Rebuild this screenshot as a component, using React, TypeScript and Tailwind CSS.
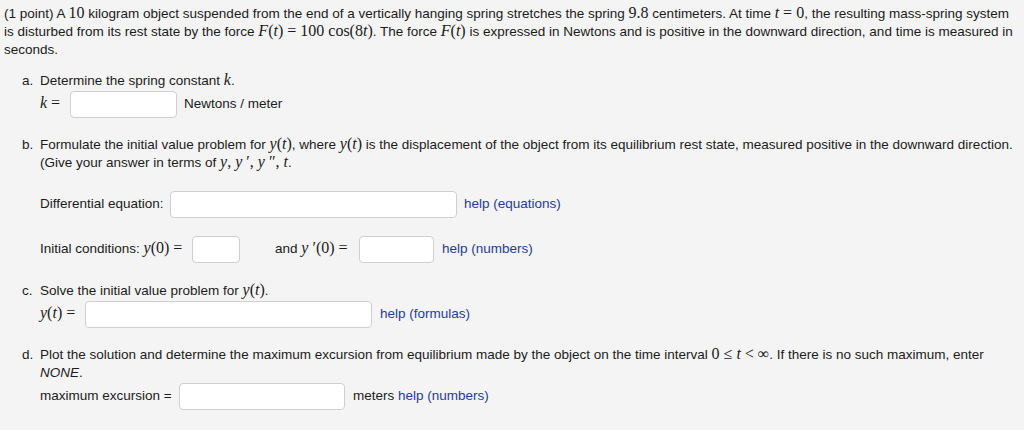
import React from "react";

const M = ({ children }: { children: React.ReactNode }) => (
  <span className="text-[16px] leading-none" style={{ fontFamily: '"Liberation Serif", "Times New Roman", serif' }}>
    {children}
  </span>
);
const I = ({ children }: { children: React.ReactNode }) => <i>{children}</i>;
const Eq = ({ c = "=" }: { c?: string }) => <span className="mx-[4px]">{c}</span>;

const Input = ({ w }: { w: string }) => (
  <span className={`inline-block h-[27px] ${w} rounded-[4px] border border-[#cfcfcf] bg-white`} />
);

const Help = ({ children }: { children: React.ReactNode }) => (
  <span className="text-[#1f3c94]">{children}</span>
);

export default function App() {
  return (
    <div
      className="w-[1024px] h-[430px] bg-[#f4f4f4] text-[#1b1b1b] text-[13.5px] leading-[18px] pt-[5px] overflow-hidden"
      style={{ fontFamily: '"Liberation Sans", Arial, Helvetica, sans-serif' }}
    >
      <div className="px-[4px] whitespace-nowrap">
        <div>
          (1 point) A <M>10</M> kilogram object suspended from the end of a vertically hanging spring stretches the spring <M>9.8</M> centimeters. At time <M><I>t</I><Eq />0</M>, the resulting mass-spring system
        </div>
        <div>
          is disturbed from its rest state by the force <M><I>F</I>(<I>t</I>)<Eq />100 cos(8<I>t</I>)</M>. The force <M><I>F</I>(<I>t</I>)</M> is expressed in Newtons and is positive in the downward direction, and time is measured in
        </div>
        <div>seconds.</div>
      </div>

      {/* a */}
      <div className="mt-[13px] flex whitespace-nowrap">
        <span className="ml-[22px] w-[18px]">a.</span>
        <div className="flex flex-col">
          <div>
            Determine the spring constant <M><I>k</I></M>.
          </div>
          <div className="flex h-[28px] items-center">
            <span className="w-[30px]"><M><I>k</I><Eq /></M></span>
            <Input w="w-[107px]" />
            <span className="ml-[7px]">Newtons / meter</span>
          </div>
        </div>
      </div>

      {/* b */}
      <div className="mt-[18px] flex whitespace-nowrap">
        <span className="ml-[22px] w-[18px]">b.</span>
        <div className="flex flex-col">
          <div>
            Formulate the initial value problem for <M><I>y</I>(<I>t</I>)</M>, where <M><I>y</I>(<I>t</I>)</M> is the displacement of the object from its equilibrium rest state, measured positive in the downward direction.
          </div>
          <div>
            (Give your answer in terms of <M><I>y</I>, <I>y</I> ′, <I>y</I> ″, <I>t</I></M>.
          </div>
          <div className="mt-[18px] flex h-[28px] items-center">
            <span className="w-[130px]">Differential equation:</span>
            <Input w="w-[287px]" />
            <span className="ml-[7px]"><Help>help (equations)</Help></span>
          </div>
          <div className="mt-[17px] flex h-[28px] items-center">
            <span className="w-[152px]">
              Initial conditions: <M><I>y</I>(0)<Eq /></M>
            </span>
            <Input w="w-[48px]" />
            <span className="ml-[35px] w-[84px]">
              and <M><I>y</I> ′(0)<Eq /></M>
            </span>
            <Input w="w-[75px]" />
            <span className="ml-[8px]"><Help>help (numbers)</Help></span>
          </div>
        </div>
      </div>

      {/* c */}
      <div className="mt-[19px] flex whitespace-nowrap">
        <span className="ml-[22px] w-[18px]">c.</span>
        <div className="flex flex-col">
          <div>
            Solve the initial value problem for <M><I>y</I>(<I>t</I>)</M>.
          </div>
          <div className="flex h-[28px] items-center">
            <span className="w-[45px]"><M><I>y</I>(<I>t</I>)<Eq /></M></span>
            <Input w="w-[287px]" />
            <span className="ml-[8px]"><Help>help (formulas)</Help></span>
          </div>
        </div>
      </div>

      {/* d */}
      <div className="mt-[18px] flex whitespace-nowrap">
        <span className="ml-[22px] w-[18px]">d.</span>
        <div className="flex flex-col">
          <div>
            Plot the solution and determine the maximum excursion from equilibrium made by the object on the time interval <M>0<Eq c="≤" /><I>t</I><Eq c="<" />∞</M>. If there is no such maximum, enter
          </div>
          <div>
            <i>NONE</i>.
          </div>
          <div className="flex h-[28px] items-center">
            <span className="w-[139px]">maximum excursion =</span>
            <Input w="w-[166px]" />
            <span className="ml-[8px]">
              meters <Help>help (numbers)</Help>
            </span>
          </div>
        </div>
      </div>
    </div>
  );
}
